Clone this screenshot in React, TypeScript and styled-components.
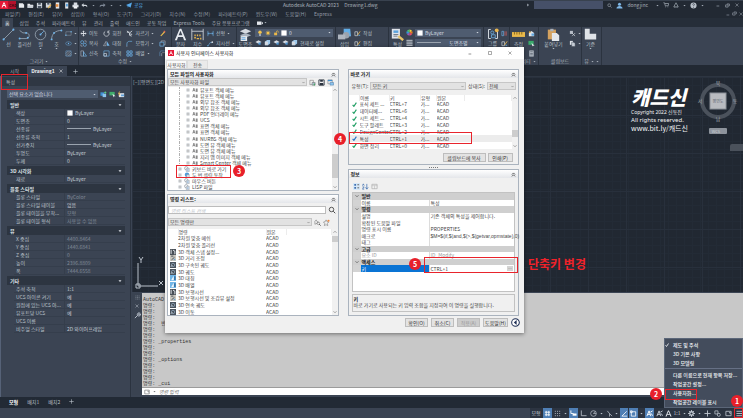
import React from 'react';
import styled, { createGlobalStyle, css } from 'styled-components';

const Global = createGlobalStyle`
  *, *::before, *::after { box-sizing: border-box; }
  html, body { margin: 0; padding: 0; }
  body { background: #222933; overflow: hidden; }
  body, button, select, input, table {
    font-family: "Noto Sans CJK KR", "Noto Sans", sans-serif;
    font-size: 5px;
    line-height: 6px;
  }
  button, select, input { margin: 0; padding: 0; border: 0; border-radius: 0; background: none; color: inherit; }
  ul { list-style: none; margin: 0; padding: 0; }
  a { color: inherit; text-decoration: none; }
  svg { display: block; flex: none; }
`;

/* ---------- icons ---------- */

const B = '#6fb4ea';
const W = '#d5dae1';

const glyphs: Record<string, React.ReactNode> = {
  line: <><path d="M2 14 14 2" stroke="#9aa7b5" /><circle cx="2" cy="14" r="1.3" fill={B} /><circle cx="14" cy="2" r="1.3" fill={B} /></>,
  poly: <><path d="M2 13h8c5 0 5-7 0-7H6L2 3" stroke="#9aa7b5" /><circle cx="2" cy="13" r="1.2" fill={B} /><circle cx="10" cy="6" r="1.2" fill={B} /><circle cx="12" cy="12" r="1.2" fill={B} /></>,
  circle: <><circle cx="8" cy="8" r="6.5" stroke="#9aa7b5" /><path d="M8 8 12 4" stroke={B} /><circle cx="8" cy="8" r="1.2" fill={B} /></>,
  arc: <><path d="M2 14C2 7 7 3 14 3" stroke="#9aa7b5" /><circle cx="2" cy="14" r="1.2" fill={B} /><circle cx="14" cy="3" r="1.2" fill={B} /><circle cx="5" cy="6" r="1.2" fill={B} /></>,
  rect: <><path d="M2 4h12v8H2z" stroke="#9aa7b5" /><circle cx="2" cy="12" r="1.6" fill={B} /><circle cx="14" cy="4" r="1.6" fill={B} /></>,
  ellipse: <><ellipse cx="8" cy="8" rx="6.5" ry="4" stroke={B} /><circle cx="8" cy="8" r="1.5" fill={B} /></>,
  hatch: <><path d="M2 2h12v12H2z" stroke={B} /><path d="M2 8 8 2M2 13 13 2M6 14l8-8M10 14l4-4" stroke={W} /></>,
  move: <path d="M8 1 11 4H9v3h3V5l3 3-3 3V9H9v3h2l-3 3-3-3h2V9H4v2L1 8l3-3v2h3V4H5z" fill={W} />,
  copy: <><circle cx="5" cy="5" r="3.5" stroke={B} strokeWidth="1.5" /><circle cx="11" cy="11" r="3.5" stroke={B} strokeWidth="1.5" /><path d="M10 2h4v4M2 10v4h4" stroke={W} /></>,
  stretch: <><path d="M2 2h6v12H2z" stroke={W} /><path d="M8 14h7L8 4z" stroke={B} strokeWidth="1.5" /></>,
  rotate: <path d="M5 3a6 6 0 1 0 6 0M11 3l4-1M11 3v4" stroke={W} strokeWidth="1.7" />,
  mirror: <><path d="M7 3v10H1z" stroke={W} /><path d="M9 3v10h6z" fill={B} /></>,
  scale: <><path d="M2 2h12v12H2z" stroke={B} strokeWidth="1.4" /><path d="M2 8h6v6H2z" stroke={W} strokeWidth="1.4" /></>,
  trim: <path d="M2 2l6 5M2 5h6M8 7l6-5M8 7v5l5 2M9 9l5 1" stroke={W} strokeWidth="2" />,
  fillet: <><path d="M2 14V9c0-4 3-6 6-6h6" stroke={B} strokeWidth="1.5" /><circle cx="2" cy="14" r="1" fill={W} /></>,
  array: <path d="M2 2h5v5H2zM9 2h5v5H9zM2 9h5v5H2zM9 9h5v5H9z" stroke={B} strokeWidth="1.7" />,
  pencil: <><path d="M3 13 12 3l2 2-9 9z" fill="#f0c14b" /><path d="M11 2l3 3" stroke="#e06a55" strokeWidth="3" /></>,
  box: <><path d="M2 5h9v9H2z" stroke={B} strokeWidth="1.6" /><path d="M5 5V2h9v9h-3" stroke={W} /></>,
  offset: <><path d="M2 14V6c0-2 1-4 4-4h8" stroke={B} /><path d="M6 14V8l2-2h6" stroke={W} /></>,
  text: <path d="M1 15 7 1h2l6 14h-2.6l-1.4-4H5l-1.4 4zM5.7 9h4.6L8 3.5z" fill="#e6eaef" />,
  dim: <><path d="M1 1v14M15 1v14M1 4h14" stroke={W} /><path d="M5 8v2M8 8v2M11 8v2M4 12h2M7 13h3M12 12v2" stroke="#e7b54e" strokeWidth="1.6" /></>,
  dimlin: <path d="M2 2v12M14 2v12M2 8h12M5 6 2 8l3 2M11 6l3 2-3 2" stroke={B} strokeWidth="1.3" />,
  leader: <><path d="M2 14 7 6h5" stroke={B} strokeWidth="1.3" /><circle cx="12" cy="5" r="2" fill={W} /><circle cx="2" cy="13" r="1.4" fill={B} /></>,
  layers: <><path d="M8 1l7 3-7 3-7-3z" fill={W} /><path d="M8 6l7 3-7 3-7-3z" fill="#aab3bf" /><path d="M2 10h8v6H2z" fill="#e6eaef" /><path d="M3 12h5M3 14h5" stroke="#4f9ad8" /></>,
  bulb: <><circle cx="8" cy="6" r="4.5" fill="#f3c34e" /><path d="M6 11h4v4H6z" fill="#dfe3e8" /></>,
  sun: <><circle cx="8" cy="8" r="4" fill="#f3c34e" /><path d="M8 1v14M1 8h14M3 3l10 10M13 3 3 13" stroke="#f3c34e" /></>,
  lock: <><path d="M3 7h8v7H3z" fill="#e9b84a" /><path d="M9 7V5c0-4 5-4 5 0v2" stroke="#e9b84a" strokeWidth="1.8" /></>,
  swatch: <path d="M1 1h14v14H1z" fill="#fff" />,
  lay1: <><path d="M1 7l7-4 7 4-7 4z" fill={W} /><path d="M8 8h5v5H8z" fill="#4f9ad8" /></>,
  lay2: <><path d="M2 6l5-4h7v8l-5 4H2z" fill="#9fc9ec" /><path d="M2 6h7v8H2z" fill={W} /></>,
  insert: <><path d="M7 1h8l1 9-9 1z" fill="#62aee8" /><circle cx="10" cy="9" r="4" fill="#9aa2ad" /><path d="M0 8h9v6H0z" fill="#aeb5bf" /></>,
  create: <><path d="M2 4h6v9H2z" stroke={W} strokeWidth="1.5" /><path d="M8 12 14 3" stroke="#e7b54e" strokeWidth="2" /><path d="M10 12h4" stroke={B} strokeWidth="2" /></>,
  props: <><path d="M1 1h10v12H1z" fill="#dfe4ea" /><path d="M3 3h6v3H3z" fill="#5ba3dd" /><path d="M3 8h6M3 10h5" stroke="#5d6876" /><path d="M9 10l6 5" stroke="#e7c46a" strokeWidth="3" /></>,
  wheel: <><path d="M8 8V1a7 7 0 0 1 6 3.500z" fill="#f4d03f" /><path d="M8 8l6-3.500a7 7 0 0 1 0 7z" fill="#e67e22" /><path d="M8 8l6 3.500A7 7 0 0 1 8 15z" fill="#e74c6c" /><path d="M8 8v7a7 7 0 0 1-6-3.500z" fill="#9b59b6" /><path d="M8 8l-6 3.500a7 7 0 0 1 0-7z" fill="#3498db" /><path d="M8 8 2 4.500A7 7 0 0 1 8 1z" fill="#4bbf73" /></>,
  weights: <path d="M1 3h14M1 7h14M1 11h14M1 14.500h14" stroke={W} strokeWidth="2" />,
  group: <><path d="M5 2H2v12h3M11 2h3v12h-3" stroke={W} strokeWidth="1.3" /><circle cx="7" cy="6" r="2" stroke={B} /><path d="M6 9h5v4H6z" stroke={B} /><circle cx="13" cy="3" r="2.500" fill="#e7b54e" /></>,
  ungroup: <><path d="M2 3h4v10H2z" stroke={B} strokeWidth="1.5" /><path d="M9 3v10M12 3v10" stroke="#d26060" strokeWidth="1.500" /></>,
  ruler: <><path d="M0 5h16v6H0z" fill="#e9b84a" /><path d="M3 5v3M6 5v3M9 5v3M12 5v3" stroke="#7b5c16" /></>,
  house: <><path d="M2 7l6-5 6 5v7H2z" fill="#dfe4ea" /><path d="M8 8h6v5H8z" fill="#5ba3dd" /><circle cx="4" cy="5" r="2" fill="#e7b54e" /></>,
  select: <><path d="M1 2h12v9H1z" fill="#39a96b" /><path d="M8 6l7 7-4 0-1 2z" fill="#e6eaef" /></>,
  calc: <><path d="M3 1h10v14H3z" fill="#b9c0c9" /><path d="M5 4h6M5 8h6M5 11h6" stroke="#4c5664" strokeWidth="1.500" /></>,
  paste: <><path d="M1 2h10v12H1z" fill="#d4a25f" /><path d="M4 1h4v3H4z" fill="#aab1bb" /><path d="M6 6h6l3 3v7H6z" fill="#e3e7ec" /></>,
  cut: <><path d="M2 2h7v7H2z" fill="#b7bec8" /><path d="M7 7l7 7M14 7l-7 7" stroke={W} strokeWidth="1.500" /></>,
  sheet: <><path d="M2 2h7v9H2z" fill="#dfe4ea" /><path d="M6 5h5l3 3v7H6z" fill="#c5ccd5" stroke="#3b4453" /></>,
  base: <path d="M1 1h6v6h8v7H1z" fill="#dfe3e8" />,
  newdoc: <path d="M2 3h9l3 3v7H2z" fill="#e8ebef" />,
  open: <><path d="M1 4h5l2 2h6v7H1z" fill="#e8ebef" /><path d="M3 8h12l-2 5H1z" fill="#c9cfd7" /></>,
  save: <><path d="M2 2h12v12H2z" fill="#cfd5dc" /><path d="M5 2h6v4H5zM4 9h8v5H4z" fill="#4c5664" /></>,
  saveas: <><path d="M2 2h11v11H2z" fill="#cfd5dc" /><path d="M5 2h5v4H5z" fill="#4c5664" /><path d="M7 14l7-8" stroke="#e7b54e" strokeWidth="2.500" /></>,
  phone: <><path d="M4 1h8v14H4z" fill="#e3e7ec" /><path d="M4 5h6v6H4z" fill="#e58a3c" /></>,
  phone2: <><path d="M5 1h7v14H5z" fill="#e3e7ec" /><path d="M7 4h4v6H7z" fill="#4f9ad8" /></>,
  print: <><path d="M4 1h8v5H4zM1 6h14v6H1z" fill="#d5dae1" /><path d="M4 10h8v5H4z" fill="#f5f6f8" /></>,
  undo: <path d="M1 7l5-4v3h4c4 0 5 3 4 6-1-2-3-3-5-3H6v3z" fill="#cfd5dc" />,
  redo: <path d="M15 7l-5-4v3H6c-4 0-5 3-4 6 1-2 3-3 5-3h3v3z" fill="#7e8896" />,
  plane: <path d="M0 8 16 1l-4 14-5-4-2 4-1-5z" fill="#57a9ea" />,
  user: <><circle cx="8" cy="5" r="3.500" fill="#7fb8e8" /><path d="M1 15c0-8 14-8 14 0z" fill="#7fb8e8" /></>,
  search: <><circle cx="7" cy="7" r="4.500" stroke="currentColor" strokeWidth="1.800" /><path d="m10.500 10.500 4 4" stroke="currentColor" strokeWidth="2" /></>,
  cart: <path d="M1 2h3l2 8h8l1-6H5M6 13h2M12 13h2" stroke="currentColor" strokeWidth="1.800" />,
  tri: <path d="M8 2 14 13H2zM5 13v2M11 13v2" stroke="currentColor" strokeWidth="1.800" />,
  help: <><circle cx="8" cy="8" r="7" fill="#b9c0c9" /><path d="M6 6c0-3 4-3 4 0 0 1-2 1-2 3M8 11v2" stroke="#2a323e" strokeWidth="1.500" /></>,
  min: <path d="M2 12h11" stroke="currentColor" strokeWidth="2.500" />,
  rest: <><path d="M2 6h8v7H2z" stroke="currentColor" strokeWidth="2" /><path d="M6 3h8v7" stroke="currentColor" strokeWidth="2" /></>,
  max: <path d="M2 2h12v12H2z" stroke="currentColor" strokeWidth="2" />,
  x: <path d="m2 2 12 12M14 2 2 14" stroke="currentColor" strokeWidth="2" />,
  down: <path d="M2 5h12L8 12z" fill="currentColor" />,
  chev: <path d="m2 5 6 6 6-6" stroke="currentColor" strokeWidth="2" />,
  chevup: <path d="m2 11 6-6 6 6" stroke="currentColor" strokeWidth="2" />,
  collapse: <path d="m3 8 5-5 5 5M3 14l5-5 5 5" stroke="currentColor" strokeWidth="2.200" />,
  right: <path d="M5 2v12l7-6z" fill="currentColor" />,
  wrench: <path d="M2 14 8 8M8 8c-2-4 2-7 5-6l-3 3 2 2 3-3c1 4-3 7-7 4" stroke="#b8c0ca" strokeWidth="2.200" />,
  pick: <><path d="M1 3h8v8H1z" fill="#3f8fd2" /><path d="M6 6h8v8H6z" fill="#8cc4ee" /><path d="M12 1v5M9.500 3.500h5" stroke="#5fd08b" strokeWidth="2" /></>,
  pick2: <><path d="M1 2h12v8H1z" fill="#3fae6c" /><path d="M8 6l7 6-4 0-1 3z" fill="#e6eaef" /></>,
  quick: <><path d="M2 5h12v9H2z" fill="#dfe4ea" /><path d="M7 8h7v4H7z" fill="#5d9fd8" /><path d="M4 1 1 6h3L2 10" stroke="#e7b54e" strokeWidth="2" /></>,
  check: <path d="M2 9l4 5L14 2" stroke="currentColor" strokeWidth="3.500" />,
  menu: <path d="M1 3h14M1 8h14M1 13h14" stroke="currentColor" strokeWidth="2" />,
  grid: <path d="M2 5h12M2 11h12M5 2v12M11 2v12" stroke="currentColor" strokeWidth="2" />,
  dots: <path d="M2 3h2M7 3h2M12 3h2M2 8h2M7 8h2M12 8h2M2 13h2M7 13h2M12 13h2" stroke="currentColor" strokeWidth="2" />,
  infer: <><path d="M2 1v7h6" stroke="currentColor" strokeWidth="2" /><path d="M6 8h9v5H6z" fill="currentColor" /></>,
  ortho: <path d="M3 1v12h12" stroke="currentColor" strokeWidth="1.800" />,
  polar: <><circle cx="8" cy="8" r="6.500" stroke="currentColor" strokeWidth="1.500" /><path d="M8 8h6M8 8l4-5" stroke="currentColor" strokeWidth="1.500" /></>,
  iso: <path d="M3 2l5 6 6 6M8 8v7" stroke="currentColor" strokeWidth="1.600" />,
  track: <path d="M2 14 13 3M2 14h12" stroke="currentColor" strokeWidth="1.800" />,
  snap: <path d="M3 4h10v10H3zM1 2h4v4H1z" stroke="currentColor" strokeWidth="1.800" />,
  ann: <path d="M2 14 7 2l4 12M4 10h5M10 5l5-3M12 8l3 5" stroke="currentColor" strokeWidth="2.200" />,
  gear: <><circle cx="8" cy="8" r="4" stroke="currentColor" strokeWidth="3" /><path d="M8 0v4M8 12v4M0 8h4M12 8h4M2.500 2.500l2 2M11.500 11.500l2 2M13.500 2.500l-2 2M4.500 11.500l-2 2" stroke="currentColor" strokeWidth="2" /></>,
  plus: <path d="M8 1v14M1 8h14" stroke="currentColor" strokeWidth="2" />,
  iso2: <><path d="M2 2h7v7H2z" stroke="currentColor" strokeWidth="1.600" /><circle cx="11" cy="11" r="3.500" stroke="currentColor" strokeWidth="1.600" /></>,
  screen: <path d="M2 3h12v10H2zM9 6h3v3" stroke="currentColor" strokeWidth="1.800" />,
  rec: <><path d="M0 4h12v9H0z" fill="#e3e7ec" /><path d="m12 8 4-3v7z" fill="#e3e7ec" /></>,
  leaf: <><path d="M2 12 5 3l3 9M3 9h4" stroke="#555" strokeWidth="1.600" /><path d="M10 4h5v9h-5z" fill="#8a8a8a" /></>,
  keys: <><circle cx="6" cy="6" r="4.500" stroke="#767f8b" strokeWidth="1.500" /><path d="M6 6h8v9H6z" fill="#dde4ec" stroke="#76808c" /><path d="M8 9h4M8 12h4" stroke="#5691c8" /></>,
  dblclick: <><circle cx="8" cy="7" r="6" fill="#4b9bd9" /><path d="M7 7h7v8H7z" fill="#dde4ec" stroke="#76808c" /></>,
  import: <><path d="M2 3h8v10H2z" stroke="#555" /><path d="M7 8h7v6H7z" fill="#bcd" stroke="#555" /><path d="M12 10v5" stroke="#3aa655" strokeWidth="2.500" /></>,
  disk: <><path d="M2 2h12v12H2z" stroke="#2c3440" strokeWidth="2" /><path d="M5 2h6v4H5zM4 9h8v5H4z" fill="#2c3440" /></>,
  wins: <><path d="M2 2h10v9H2z" stroke="#555" /><path d="M2 2h10v3H2z" fill="#3f8fd2" /><path d="M7 8h8v6H7z" fill="#8cc4ee" stroke="#3f6f9e" /></>,
  find: <><path d="m2 5 3-3 2 4 3 1-3 3-5 2z" stroke="#555" /><circle cx="10" cy="10" r="3" stroke="#555" /><path d="m12 12 3 3" stroke="#333" strokeWidth="2" /></>,
  star: <><path d="m7 2 2 4 4 1-3 3 1 5-4-2-4 2 1-5-3-3 4-1z" stroke="#555" /><circle cx="12.500" cy="4" r="2.500" fill="#f0883e" /></>,
  expand: <><path d="M3 3h10v10H3z" fill="#fff" stroke="#8b95a1" strokeWidth="1.500" /><path d="M5 8h6M8 5v6" stroke="#555" strokeWidth="1.400" /></>,
  cat: <><path d="M0 0h16v16H0z" fill="#d6e8f8" /><path d="M3 2h4v4H3zM3 9h4v4H3z" fill="#3f6fb0" /><path d="M10 4h4M10 11h4" stroke="#555" strokeWidth="2" /></>,
  sort: <path d="M3 2l2 4M3 2 1 6M1 9h4l-4 5h4M11 2v12M8 10l3 4 3-4" stroke="#3f6fb0" strokeWidth="1.700" />,
  pages: <><path d="M2 3h12v10H2z" stroke="#aaa" strokeWidth="1.500" /><path d="M2 6h12M8 6v7" stroke="#aaa" /></>,
  backc: <><circle cx="8" cy="8" r="6.800" fill="#fff" stroke="#1f2f55" strokeWidth="1.800" /><path d="M10 3.500 5 8l5 4.500z" fill="#1f2f55" /></>,
  acad: <><path d="M0 0h16v16H0z" fill="#e51937" /><path d="M3 13 7 3h2l4 10h-2l-1-3H6l-1 3zM6.800 8h2.500L8 5z" fill="#fff" /></>,
  c3a: <><path d="M0 0h16v16H0z" fill="#4a5058" /><path d="M3 2v11M8 3l5 3v8" stroke="#e6eaef" strokeWidth="2.500" /></>,
  c3b: <><path d="M0 0h16v16H0z" fill="#c9c6be" /><path d="M3 3h6M4 13l8-7" stroke="#4a4f57" strokeWidth="2.500" /><path d="M10 10h4v4h-4z" fill="#6da0cd" /></>,
  c3c: <><path d="M0 0h16v16H0z" fill="#4b535d" /><circle cx="8" cy="8" r="4.500" stroke="#8fa6ba" strokeWidth="2" /><path d="M2 13l5-5" stroke="#fff" strokeWidth="1.500" /></>,
  c3d: <><path d="M0 0h16v16H0z" fill="#71b6e8" /><path d="M3 14 10 2v12z" fill="#f3f7fa" /><path d="M11 3h4v10h-4z" fill="#2f6ea3" /></>,
};

const Ico = ({ n, s = 7, w }: { n: string; s?: number; w?: number }) => (
  <svg width={w ?? s} height={s} viewBox="0 0 16 16" fill="none" aria-hidden="true">{glyphs[n]}</svg>
);

/* ---------- shared parts ---------- */

const Row = styled.div<{ $gap?: number }>`
  display: flex;
  align-items: center;
  gap: ${(p) => p.$gap ?? 0}px;
`;
const Spacer = styled.span`flex: 1;`;

const SelectWrap = styled.span<{ $tone: 'dark' | 'light' }>`
  display: flex;
  align-items: center;
  flex: 1;
  min-width: 0;
  height: 8px;
  padding: 0 2px;
  gap: 2px;
  ${(p) => (p.$tone === 'dark'
    ? css`background: #4f5c70; color: #d3d9e0;`
    : css`background: #e2e2e2; color: #444; border: 1px solid #c6c6c6; padding: 0 1px;`)}
`;
const SelectEl = styled.select<{ $center?: boolean }>`
  appearance: none;
  flex: 1;
  min-width: 0;
  height: 6px;
  outline: 0;
  text-align: ${(p) => (p.$center ? 'center' : 'left')};
  text-align-last: ${(p) => (p.$center ? 'center' : 'left')};
`;
const Combo = ({ label, value, tone = 'dark', children, center }: {
  label: string; value: string; tone?: 'dark' | 'light'; children?: React.ReactNode; center?: boolean;
}) => (
  <SelectWrap $tone={tone}>
    {children}
    <SelectEl aria-label={label} $center={center}><option>{value}</option></SelectEl>
    <Ico n={tone === 'dark' ? 'down' : 'chev'} s={3} />
  </SelectWrap>
);

/* ---------- application frame ---------- */

const App = styled.div`
  position: relative;
  display: flex;
  flex-direction: column;
  min-height: 100vh;
  overflow: hidden;
  background: #222933;
  color: #b9c0c9;
`;
const TitleBar = styled.header`
  display: grid;
  grid-template-columns: 283px 1fr auto;
  align-items: center;
  height: 9px;
  border-top: 1px solid #39424f;
  color: #a9b1bb;
`;
const Quick = styled(Row)`gap: 2px; height: 8px;`;
const QuickButton = styled.button`display: flex; width: 7px; justify-content: center; color: #9aa3ae;`;
const AppBadge = styled.button`
  display: flex;
  align-items: center;
  gap: 1px;
  width: 16px;
  height: 8px;
  background: #b3122d;
  color: #3c0710;
  font-size: 4px;
  font-weight: 700;
`;
const Share = styled.a`display: flex; align-items: center; gap: 2px; color: #57a9ea;`;
const SearchBox = styled.input`width: 69px; height: 8px; background: #465068;`;
const MenuBar = styled.nav`
  display: flex;
  align-items: center;
  gap: 8px;
  height: 9px;
  padding-left: 5px;
  color: #939ca7;
`;
const MenuButton = styled.button`white-space: nowrap;`;
const RibbonTabs = styled.nav`
  display: flex;
  align-items: center;
  height: 9px;
  gap: 7px;
  padding-left: 2px;
  background: #262e39;
  color: #a8b0ba;
`;
const RibbonTab = styled.button<{ $on?: boolean }>`
  height: 9px;
  white-space: nowrap;
  ${(p) => p.$on && css`background: #3b4453; padding: 0 3px; color: #dfe3e8;`}
`;
const Ribbon = styled.section`
  display: flex;
  height: 38px;
  background: #3b4453;
`;
const Panel = styled.section<{ $w: number }>`
  display: flex;
  flex-direction: column;
  width: ${(p) => p.$w}px;
  flex: none;
  border-right: 1px solid #2b333f;
`;
const PanelTools = styled.div<{ $gap?: number }>`
  display: flex;
  flex: 1;
  padding: 1px 0 0 1px;
  gap: ${(p) => p.$gap ?? 2}px;
`;
const PanelTitle = styled.button`
  display: flex;
  align-items: center;
  justify-content: center;
  gap: 2px;
  height: 8px;
  color: #a8b0ba;
  white-space: nowrap;
`;
const BigTool = styled.button`
  display: flex;
  flex-direction: column;
  align-items: center;
  width: 15px;
  flex: none;
  white-space: nowrap;
  color: #b9c0c9;
`;
const ToolColumn = styled.div`
  display: flex;
  flex-direction: column;
  gap: 2px;
  padding-top: 1px;
`;
const SmallTool = styled.button`
  display: flex;
  align-items: center;
  gap: 2px;
  height: 8px;
  white-space: nowrap;
  color: #b9c0c9;
`;
const ComboColumn = styled.div`display: flex; flex: 1; flex-direction: column; gap: 1px; padding-right: 2px;`;
const ComboRow = styled.div`display: flex; align-items: center; gap: 2px; height: 9px; white-space: nowrap;`;
const RuleSample = styled.span`width: 24px; height: 1px; background: #9aa3ae;`;

const Big = ({ n, label, more, s = 13 }: { n: string; label: string; more?: boolean; s?: number }) => (
  <BigTool><Ico n={n} s={s} /><span>{label}</span>{more && <Ico n="down" s={3} />}</BigTool>
);
const Small = ({ n, label, more }: { n: string; label?: string; more?: boolean }) => (
  <SmallTool aria-label={label ?? n}><Ico n={n} />{label}{more && <Ico n="down" s={3} />}</SmallTool>
);

const DocTabs = styled.nav`
  display: flex;
  align-items: center;
  gap: 6px;
  height: 11px;
  padding: 1px 0 0 8px;
  background: #222933;
`;
const DocTab = styled.button<{ $on?: boolean }>`
  display: flex;
  align-items: center;
  gap: 4px;
  height: 10px;
  padding: 0 2px;
  color: #a8b0ba;
  ${(p) => p.$on && css`background: #3b4453; color: #eef0f3; font-weight: 700; padding: 0 4px;`}
`;
const Body = styled.main`
  display: grid;
  grid-template-columns: 131px 1fr;
  flex: 1;
  background: #3b4453;
`;

/* ---------- properties palette ---------- */

const Palette = styled.aside`
  padding: 1px 5px 0 6px;
  border-left: 1px solid #566277;
  border-right: 1px solid #2b333f;
`;
const PaletteTitle = styled.h2`
  margin: 0 -5px 4px -6px;
  padding-left: 5px;
  height: 9px;
  background: #2f3743;
  font-size: 5px;
  line-height: 9px;
  font-weight: 400;
`;
const PaletteTop = styled.div`display: flex; align-items: center; gap: 2px; height: 8px; margin-bottom: 2px;`;
const IconButton = styled.button`display: flex; align-items: center; justify-content: center;`;
const Group = styled.section`margin-bottom: 1px;`;
const GroupHead = styled.button`
  display: flex;
  align-items: center;
  justify-content: space-between;
  width: 100%;
  height: 9px;
  padding: 0 3px;
  background: #2d3541;
  color: #dfe3e8;
  font-weight: 700;
`;
const PropTable = styled.table`
  width: calc(100% - 7px);
  margin-left: 7px;
  border-collapse: separate;
  border-spacing: 0;
  table-layout: fixed;
  th, td {
    height: 8px;
    padding: 0 0 0 2px;
    line-height: 7px;
    border-bottom: 1px solid #353e4c;
    font-weight: 400;
    text-align: left;
    white-space: nowrap;
    overflow: hidden;
  }
  th { width: 50px; }
  td { color: #c5cbd3; border-left: 1px solid #353e4c; }
`;
const Value = styled.span<{ $dim?: boolean }>`
  display: flex;
  align-items: center;
  gap: 2px;
  ${(p) => p.$dim && css`color: #808a97;`}
`;

type Prop = [string, string, ('dim' | 'line' | 'swatch')?];
const groups: { title: string; rows: Prop[] }[] = [
  { title: '일반', rows: [['색상', 'ByLayer', 'swatch'], ['도면층', '0'], ['선종류', 'ByLayer', 'line'], ['선종류 축척', '1'], ['선가중치', 'ByLayer', 'line'], ['투명도', 'ByLayer'], ['두께', '0']] },
  { title: '3D 시각화', rows: [['재료', 'ByLayer']] },
  { title: '플롯 스타일', rows: [['플롯 스타일', 'ByColor', 'dim'], ['플롯 스타일 테이블', '없음'], ['플롯 테이블을 부착...', '모형', 'dim'], ['플롯 테이블 형식', '사용할 수 없음', 'dim']] },
  { title: '뷰', rows: [['X 중심', '4400.8464', 'dim'], ['Y 중심', '1440.6841', 'dim'], ['Z 중심', '0', 'dim'], ['높이', '2396.8809', 'dim'], ['폭', '7444.6558', 'dim']] },
  { title: '기타', rows: [['주석 축척', '1:1'], ['UCS 아이콘 켜기', '예'], ['원점에 있는 UCS 아...', '예'], ['뷰포트당 UCS', '예'], ['UCS 이름', ''], ['비주얼 스타일', '2D 와이어프레임']] },
];

/* ---------- drawing area and command window ---------- */

const Work = styled.div`display: flex; flex-direction: column; padding-left: 1px; min-width: 0;`;
const Canvas = styled.section`
  position: relative;
  flex: 1;
  border-top: 1px solid #2d3541;
  background-color: #212832;
  background-image:
    linear-gradient(#28303c 1px, transparent 1px),
    linear-gradient(90deg, #28303c 1px, transparent 1px),
    linear-gradient(#232b36 1px, transparent 1px),
    linear-gradient(90deg, #232b36 1px, transparent 1px);
  background-size: 38px 38px, 38px 38px, 8px 8px, 8px 8px;
`;
const ViewLabel = styled.span`position: absolute; left: 1px; top: 2px; color: #a8b0ba; white-space: nowrap;`;
const Ucs = styled.svg`position: absolute; left: 3px; bottom: 3px;`;
const Credit = styled.div`
  position: absolute;
  right: 55px;
  top: 8px;
  display: flex;
  flex-direction: column;
  color: #f4f5f7;
  font-family: "Noto Sans", "Noto Sans CJK KR", sans-serif;
  font-size: 6px;
  line-height: 8px;
  white-space: nowrap;
`;
const CreditName = styled.strong`font-family: "Noto Sans CJK KR", sans-serif; font-size: 20px; line-height: 23px; font-weight: 900; font-style: italic; color: #fff;`;
const CreditSmall = styled.span`font-size: 5px;`;
const CreditLink = styled.a`font-family: "Noto Sans CJK KR", sans-serif; font-size: 7px;`;
const Cube = styled.svg`position: absolute; right: 3px; top: 2px;`;
const NavBar = styled.span`position: absolute; right: 0; top: 67px; width: 13px; height: 7px; background: #4a515b; border-radius: 2px 0 0 0;`;
const Command = styled.section`
  display: grid;
  grid-template-columns: 10px 1fr;
  height: 102px;
  margin: 1px 0 2px;
`;
const CommandSide = styled.div`
  display: flex;
  flex-direction: column;
  align-items: center;
  gap: 4px;
  padding-top: 2px;
  background: #3a4351;
  color: #b8c0ca;
`;
const CommandMain = styled.div`display: flex; flex-direction: column;`;
const History = styled.pre`
  display: flex;
  flex-direction: column;
  justify-content: flex-end;
  flex: 1;
  margin: 0;
  padding: 0 0 0 1px;
  background: #c8c8c8;
  color: #333;
  font-family: "Liberation Mono", "Noto Sans CJK KR", monospace;
  font-size: 5px;
  line-height: 6px;
`;
const Prompt = styled.label`
  display: flex;
  align-items: center;
  gap: 3px;
  height: 8px;
  padding-left: 2px;
  border-top: 1px solid #9b9b9b;
  background: #fff;
  color: #777;
`;
const PromptInput = styled.input`flex: 1; height: 7px; font-style: italic; &::placeholder { color: #777; }`;

/* ---------- bottom bars ---------- */

const LayoutBar = styled.nav`display: flex; align-items: center; gap: 9px; height: 11px; padding: 0 0 2px 9px; background: #222a35;`;
const LayoutTab = styled.button<{ $on?: boolean }>`${(p) => p.$on && css`color: #fff; font-weight: 700;`}`;
const StatusBar = styled.footer`
  display: flex;
  align-items: center;
  gap: 1px;
  height: 10px;
  background: #3b4453;
  color: #c3cad3;
`;
const StatusTools = styled.div`display: flex; align-items: center; gap: 1px; background: #2c3441;`;
const StatusButton = styled.button<{ $on?: boolean; $w?: number }>`
  display: flex;
  align-items: center;
  justify-content: center;
  width: ${(p) => p.$w ?? 9}px;
  height: 10px;
  white-space: nowrap;
  ${(p) => p.$on && css`background: #4f7fb5; color: #fff;`}
`;
const status: [string, boolean?, number?][] = [
  ['grid', true], ['dots'], ['down', false, 5], ['infer', true], ['ortho'], ['polar'], ['down', false, 5], ['iso', false, 8], ['down', false, 5],
  ['track', true, 8], ['snap', true], ['down', false, 5], ['ann', true, 9], ['ann', false, 8], ['text', false, 8],
];
const status2: [string, number?][] = [['down', 4], ['gear'], ['down', 5], ['plus'], ['iso2'], ['screen', 11], ['menu', 8]];

const WorkspaceMenu = styled.div`
  position: absolute;
  right: 0;
  bottom: 10px;
  width: 79px;
  padding: 1px 0;
  background: #434c5c;
  border: 1px solid #5b6678;
`;
const WorkspaceItem = styled.button`
  display: grid;
  grid-template-columns: 8px 1fr;
  align-items: center;
  width: 100%;
  height: 9px;
  color: #eef0f3;
  font-weight: 500;
  text-align: left;
  white-space: nowrap;
`;
const MenuRule = styled.hr`margin: 1px 0; border: 0; border-top: 1px solid #667085;`;

/* ---------- customize dialog ---------- */

const Dialog = styled.section`
  position: absolute;
  left: 165px;
  top: 47px;
  width: 359px;
  height: 286px;
  display: flex;
  flex-direction: column;
  background: #f0f0f0;
  color: #484848;
  box-shadow: 0 1px 4px rgba(0, 0, 0, 0.45);
`;
const DialogTitle = styled.div`
  display: flex;
  align-items: center;
  gap: 2px;
  height: 12px;
  padding: 0 5px 0 3px;
  background: #fff;
  color: #222;
`;
const WindowButton = styled.button`display: flex; justify-content: center; width: 18px; color: #555;`;
const DialogTabs = styled.div`display: flex; height: 9px; margin-top: 1px; padding-left: 1px;`;
const DialogTab = styled.button<{ $on?: boolean }>`
  width: 21px;
  border: 1px solid #dcdcdc;
  background: ${(p) => (p.$on ? '#fafafa' : '#eaeaea')};
  white-space: nowrap;
`;
const Columns = styled.div`
  display: grid;
  grid-template-columns: 1fr 1fr;
  gap: 9px;
  padding: 0 5px 0 2px;
`;
const Column = styled.div<{ $gap: number }>`display: flex; flex-direction: column; gap: ${(p) => p.$gap}px; min-width: 0;`;
const Pane = styled.section<{ $h: number }>`
  display: flex;
  flex-direction: column;
  height: ${(p) => p.$h}px;
  border: 1px solid #aab3be;
  background: #f0f0f0;
`;
const PaneHead = styled.h3`
  display: flex;
  align-items: center;
  justify-content: space-between;
  height: 8px;
  margin: 0;
  padding: 0 2px;
  background: linear-gradient(#fff, #e4e6ea);
  color: #222;
  font-size: 5px;
  line-height: 6px;
  font-weight: 700;
  flex: none;
`;
const Tools = styled.div<{ $pad?: string }>`
  display: flex;
  align-items: center;
  gap: 2px;
  padding: ${(p) => p.$pad ?? '0'};
  flex: none;
`;
const Scrolled = styled.div`
  display: grid;
  grid-template-columns: 1fr 6px;
  flex: 1;
  min-height: 0;
  background: #fff;
`;
const ScrollBar = styled.div<{ $at: number; $size: number }>`
  display: flex;
  flex-direction: column;
  align-items: center;
  justify-content: space-between;
  padding: 1px 0;
  color: #555;
  background: linear-gradient(#cdcdcd, #cdcdcd) 0 ${(p) => p.$at}px / 6px ${(p) => p.$size}px no-repeat #f1f1f1;
`;
const Scroll = (p: { at: number; size: number }) => (
  <ScrollBar $at={p.at} $size={p.size}><Ico n="chevup" s={4} /><Ico n="chev" s={4} /></ScrollBar>
);
const Tree = styled.ul`
  display: flex;
  flex-direction: column;
  min-height: 0;
  overflow: hidden;
`;
const TreeItem = styled.li<{ $deep: boolean }>`
  display: flex;
  align-items: center;
  flex: 1;
  min-height: 0;
  gap: 2px;
  margin-left: ${(p) => (p.$deep ? 11 : 10)}px;
  padding-left: ${(p) => (p.$deep ? 6 : 0)}px;
  line-height: 6px;
  white-space: nowrap;
  ${(p) => p.$deep && css`border-left: 1px dotted #b0b0b0;`}
`;
const ListTable = styled.table`
  width: 100%;
  height: 100%;
  border-collapse: collapse;
  table-layout: fixed;
  th, td { padding: 0; line-height: 6px; font-weight: 400; text-align: left; white-space: nowrap; overflow: hidden; }
  thead th { border-right: 1px solid #ececec; }
  td svg { margin: 0 auto; }
`;
const ListRow = styled.tr<{ $on?: boolean }>`${(p) => p.$on && css`background: #ececec;`}`;
const Col = styled.col<{ $w?: number }>`${(p) => p.$w && css`width: ${p.$w}px;`}`;
const Field = styled.input`flex: 1; min-width: 0; height: 8px; padding: 0 2px; border: 1px solid #bcbcbc; background: #fff; font-style: italic; &::placeholder { color: #c2c6cc; }`;
const FieldLabel = styled.span`display: flex; align-items: center; gap: 3px; white-space: nowrap;`;
const ShortSelect = styled.span<{ $w: number }>`display: flex; width: ${(p) => p.$w}px;`;
const PushButton = styled.button<{ $w: number; $off?: boolean }>`
  width: ${(p) => p.$w}px;
  height: 9px;
  border: 1px solid #bdbdbd;
  background: ${(p) => (p.$off ? '#cccccc' : '#e3e3e3')};
  color: ${(p) => (p.$off ? '#9a9a9a' : '#333')};
  white-space: nowrap;
`;
const Splitter = styled.div`height: 2px; width: 9px; margin: 0 auto; border-bottom: 1px dotted #777; flex: none;`;
const GridBox = styled.div`margin: 0 3px; flex: 1; border: 1px solid #c2c2c2; background: #fff; min-height: 0;`;
const GridTable = styled.table`
  width: 100%;
  height: 79px;
  border-collapse: separate;
  border-spacing: 0;
  table-layout: fixed;
  th, td { padding: 0 1px; line-height: 6px; font-weight: 400; text-align: left; white-space: nowrap; }
  td { border-left: 1px solid #dcdcdc; }
  th:first-child { background: #d3d3d3; padding: 0 2px; }
`;
const GridRow = styled.tr<{ $kind: string }>`
  ${(p) => p.$kind === 'cat' && css`th, th:first-child { background: #cfcfcf; font-weight: 700; color: #222; }`}
  ${(p) => p.$kind === 'dim' && css`color: #9a9a9a;`}
  ${(p) => p.$kind === 'sel' && css`th + th { background: #0a74d4; color: #fff; }`}
  ${(p) => p.$kind === 'macro' && css`td { font-family: "Liberation Sans", sans-serif; }`}
`;
const KeyCell = styled.span`display: flex; align-items: center; justify-content: space-between;`;
const MoreButton = styled.button`width: 6px; height: 5px; background: #d4d4d4; font-size: 4px; line-height: 4px; color: #666;`;
const Hint = styled.div`margin: 2px 3px 3px; height: 18px; padding: 1px; border: 1px solid #c2c2c2; flex: none; white-space: nowrap;`;
const HintTitle = styled.strong`display: block; color: #222;`;
const DialogFoot = styled.div`
  display: flex;
  align-items: center;
  justify-content: flex-end;
  gap: 3px;
  flex: 1;
  padding: 0 4px 4px 0;
`;

const tree = ['뷰포트 객체 메뉴', '뷰포트 객체 메뉴', '외부 참조 객체 메뉴', '외부 참조 객체 메뉴', 'PDF 언더레이 메뉴', 'UCS', '표면 객체 메뉴', '표면 객체 메뉴', 'NURBS 객체 메뉴', '도면 뷰 객체 메뉴', '도면 뷰 객체 메뉴', '지리 맵 이미지 객체 메뉴', 'Smart Center 객체 메뉴'];
const treeTop: [string, string][] = [['keys', '키보드 바로 가기'], ['dblclick', '두 번 클릭 동작'], ['keys', '마우스 버튼'], ['keys', 'LISP 파일']];
const commands: [string, string][] = [
  ['', '2차원 맞춤 메쉬'], ['', '2차원 맞춤 폴리선'], ['c3a', '3D 객체 스냅 설정...'], ['c3b', '3D 거리 조정'], ['c3c', '3D 구속된 궤도'], ['c3c', '3D 궤도'],
  ['c3d', '3D 대칭'], ['c3d', '3D 배열'], ['c3a', '3D 보행시선'], ['c3b', '3D 보행시선 및 조감뷰 설정'], ['c3c', '3D 연속 궤도'], ['c3c', '3D 이동'],
];
const shortcuts: [string, string][] = [['표식 세트 ...', 'CTRL+7'], ['데이터베...', 'CTRL+6'], ['시트 세트 ...', 'CTRL+4'], ['도구 팔레트', 'CTRL+3'], ['DesignCenter', 'CTRL+2'], ['특성', 'CTRL+1'], ['화면 정리', 'CTRL+0']];
const info: [string, string, string?][] = [
  ['cat', '일반'], ['', '이름', '특성'], ['cat', '명령'], ['', '설명', '기존 객체의 특성을 제어합니다.'], ['', '확장된 도움말 파일', ''],
  ['', '명령 표시 이름', 'PROPERTIES'], ['macro', '매크로', '$M=$(if,$(and,$(>,$(getvar,opmstate),0)'], ['', '태그', ''],
  ['cat', '고급'], ['dim', '요소 ID', 'ID_Modify'], ['cat', '액세스'], ['sel', '키', 'CTRL+1'],
];

const CheckMark = styled.span<{ $on?: boolean }>`display: block; color: ${(p) => (p.$on ? '#2374c6' : '#1e9e62')};`;

const CustomizeDialog = () => (
  <Dialog role="dialog" aria-label="사용자 인터페이스 사용자화">
    <DialogTitle>
      <Ico n="acad" s={6} />사용자 인터페이스 사용자화<Spacer />
      <WindowButton aria-label="최소화"><Ico n="min" s={4} /></WindowButton>
      <WindowButton aria-label="최대화"><Ico n="max" s={4} /></WindowButton>
      <WindowButton aria-label="닫기"><Ico n="x" s={4} /></WindowButton>
    </DialogTitle>
    <DialogTabs><DialogTab $on>사용자화</DialogTab><DialogTab>전송</DialogTab></DialogTabs>
    <Columns>
      <Column $gap={3}>
        <Pane $h={122}>
          <PaneHead>모든 파일의 사용자화<Ico n="collapse" s={5} /></PaneHead>
          <Tools $pad="0 4px 1px 0">
            <Combo label="사용자화 파일" value="모든 사용자화 파일" tone="light" />
            <IconButton aria-label="가져오기"><Ico n="import" /></IconButton>
            <IconButton aria-label="저장"><Ico n="disk" /></IconButton>
            <IconButton aria-label="창"><Ico n="wins" /></IconButton>
          </Tools>
          <Scrolled>
            <Tree>
              {tree.map((t, i) => <TreeItem key={i} $deep><Ico n="expand" s={4} /><Ico n="leaf" s={6} />{t}</TreeItem>)}
              {treeTop.map(([n, t]) => <TreeItem key={t} $deep={false}><Ico n="expand" s={4} /><Ico n={n} s={6} />{t}</TreeItem>)}
            </Tree>
            <Scroll at={67} size={24} />
          </Scrolled>
        </Pane>
        <Pane $h={122}>
          <PaneHead>명령 리스트:<Ico n="collapse" s={5} /></PaneHead>
          <Tools $pad="3px 2px 2px 0"><Field aria-label="명령 리스트 검색" placeholder="명령 리스트 검색" /><IconButton aria-label="검색"><Ico n="search" s={8} /></IconButton></Tools>
          <Tools $pad="2px 8px 3px 0">
            <Combo label="명령 범주" value="모든 명령만" tone="light" />
            <IconButton aria-label="명령 찾기"><Ico n="find" /></IconButton>
            <IconButton aria-label="새 명령"><Ico n="star" /></IconButton>
          </Tools>
          <Scrolled>
            <ListTable>
              <colgroup><Col $w={10} /><Col $w={88} /><Col $w={20} /><Col /></colgroup>
              <thead><tr><th /><th scope="col">명령</th><th scope="col">원본</th><th /></tr></thead>
              <tbody>{commands.map(([n, t]) => <tr key={t}><td>{n && <Ico n={n} s={6} />}</td><td>{t}</td><td>ACAD</td><td /></tr>)}</tbody>
            </ListTable>
            <Scroll at={7} size={6} />
          </Scrolled>
        </Pane>
      </Column>
      <Column $gap={1}>
        <Pane $h={96}>
          <PaneHead>바로 가기<Ico n="collapse" s={5} /></PaneHead>
          <Tools $pad="4px 2px 5px 3px">
            <FieldLabel>유형(T):</FieldLabel><Combo label="유형(T)" value="모든 키" tone="light" />
            <FieldLabel>상태(S):</FieldLabel>
            <ShortSelect $w={29}><Combo label="상태(S)" value="전체" tone="light" /></ShortSelect>
          </Tools>
          <Scrolled>
            <ListTable>
              <colgroup><Col $w={11} /><Col $w={30} /><Col $w={31} /><Col $w={16} /><Col $w={28} /><Col /></colgroup>
              <thead><tr><th /><th scope="col">이름</th><th scope="col">키</th><th scope="col">유형</th><th scope="col">원본</th><th /></tr></thead>
              <tbody>{shortcuts.map(([t, k]) => (
                <ListRow key={k} $on={t === '특성'}><td><CheckMark $on={t === '특성'}><Ico n="check" s={5} /></CheckMark></td><td>{t}</td><td>{k}</td><td>가...</td><td>ACAD</td><td /></ListRow>
              ))}</tbody>
            </ListTable>
            <Scroll at={35} size={7} />
          </Scrolled>
          <Tools $pad="4px 3px 2px 94px"><PushButton $w={43}>클립보드에 복사</PushButton><PushButton $w={25}>인쇄(P)</PushButton></Tools>
        </Pane>
        <Splitter />
        <Pane $h={147}>
          <PaneHead>정보<Ico n="collapse" s={5} /></PaneHead>
          <Tools $pad="5px 0 2px 4px">
            <IconButton aria-label="범주별"><Ico n="cat" /></IconButton>
            <IconButton aria-label="정렬"><Ico n="sort" /></IconButton>
            <IconButton aria-label="특성 페이지"><Ico n="pages" /></IconButton>
          </Tools>
          <GridBox>
            <GridTable>
              <colgroup><Col $w={8} /><Col $w={68} /><Col /></colgroup>
              <tbody>{info.map(([k, t, v]) => (
                <GridRow key={t} $kind={k}>
                  <th>{k === 'cat' && <Ico n="chev" s={4} />}</th>
                  <th scope="row" colSpan={k === 'cat' ? 2 : 1}>{t}</th>
                  {k !== 'cat' && <td>{k === 'sel' ? <KeyCell>{v}<MoreButton aria-label="키 지정">…</MoreButton></KeyCell> : v}</td>}
                </GridRow>
              ))}</tbody>
            </GridTable>
          </GridBox>
          <Hint><HintTitle>키</HintTitle>바로 가기로 사용되는 키 입력 조합을 지정하여 이 명령을 실행합니다.</Hint>
        </Pane>
      </Column>
    </Columns>
    <DialogFoot>
      <PushButton $w={23}>확인(O)</PushButton><PushButton $w={23}>취소(C)</PushButton>
      <PushButton $w={23} $off disabled>적용(A)</PushButton><PushButton $w={25}>도움말(H)</PushButton>
      <IconButton aria-label="축소"><Ico n="backc" s={9} /></IconButton>
    </DialogFoot>
  </Dialog>
);

/* ---------- tutorial annotations ---------- */

const Frame = styled.span<{ $x: number; $y: number; $w: number; $h: number }>`
  position: absolute;
  left: ${(p) => p.$x}px;
  top: ${(p) => p.$y}px;
  width: ${(p) => p.$w}px;
  height: ${(p) => p.$h}px;
  border: 1px solid #e8242c;
  pointer-events: none;
`;
const Pin = styled.span<{ $x: number; $y: number }>`
  position: absolute;
  left: ${(p) => p.$x - 6}px;
  top: ${(p) => p.$y - 6}px;
  width: 12px;
  height: 12px;
  border-radius: 50%;
  background: #e8202a;
  color: #fff;
  font-size: 7px;
  line-height: 12px;
  font-weight: 700;
  text-align: center;
`;
const Note = styled.strong`
  position: absolute;
  left: 528px;
  top: 256px;
  color: #f0222a;
  font-size: 12px;
  line-height: 16px;
  font-weight: 700;
  white-space: nowrap;
`;

const menus = ['파일(F)', '편집(E)', '뷰(V)', '삽입(I)', '형식(O)', '도구(T)', '그리기(D)', '치수(N)', '수정(M)', '파라메트릭(P)', '윈도우(W)', '도움말(H)', 'Express'];
const tabs = ['삽입', '주석', '파라메트릭', '뷰', '관리', '출력', '애드인', '공동 작업', 'Express Tools', '주요 응용프로그램'];
const history = ['AutoCAD', '명령:', '명령:', '명령:', '명령:  반대 구석 지정', '명령:', '명령:', '명령: _properties', '명령:', '명령:', '명령: _options', '명령:', '명령:', '명령:', '명령: _cui'];

export default function Page() {
  return (
    <App>
      <Global />
      <TitleBar>
        <Quick>
          <AppBadge aria-label="응용프로그램 메뉴"><Ico n="acad" s={8} />CAD</AppBadge>
          {['newdoc', 'open', 'save', 'saveas', 'phone', 'phone2', 'print', 'undo', 'down', 'redo', 'down', 'down'].map((n, i) => (
            <QuickButton key={i} aria-label={n}><Ico n={n} s={n === 'down' ? 3 : 7} /></QuickButton>
          ))}
          <Share href="#share"><Ico n="plane" s={6} />공유</Share>
        </Quick>
        <span>Autodesk AutoCAD 2023&nbsp;&nbsp;&nbsp;&nbsp; Drawing1.dwg</span>
        <Row $gap={4}>
          <Ico n="right" s={4} /><SearchBox aria-label="검색" /><Ico n="search" s={5} />
          <Ico n="user" s={7} /><span>dongjinc</span><Spacer /><Ico n="down" s={3} />
          <Ico n="cart" s={6} /><Ico n="tri" s={6} /><Ico n="down" s={3} /><Ico n="help" s={7} /><Ico n="down" s={3} />
          <Spacer /><Spacer /><Row $gap={5}><Ico n="min" s={4} /><Ico n="rest" s={5} /><Ico n="x" s={4} /></Row><span />
        </Row>
      </TitleBar>
      <MenuBar>
        {menus.map((m) => <MenuButton key={m}>{m}</MenuButton>)}
        <Spacer /><Row $gap={2}><Ico n="min" s={4} /><Ico n="rest" s={5} /><Ico n="x" s={4} /></Row>
      </MenuBar>
      <RibbonTabs>
        <RibbonTab $on>홈</RibbonTab>
        {tabs.map((t) => <RibbonTab key={t}>{t}</RibbonTab>)}
        <Row $gap={1}><Ico n="rec" s={6} /><Ico n="down" s={3} /></Row>
      </RibbonTabs>
      <Ribbon>
        <Panel $w={79}>
          <PanelTools $gap={1}>
            <Big n="line" label="선" /><Big n="poly" label="폴리선" /><Big n="circle" label="원" more /><Big n="arc" label="호" more />
            <ToolColumn><Small n="rect" more /><Small n="ellipse" more /><Small n="hatch" more /></ToolColumn>
          </PanelTools>
          <PanelTitle>그리기<Ico n="down" s={3} /></PanelTitle>
        </Panel>
        <Panel $w={93}>
          <PanelTools $gap={5}>
            <ToolColumn><Small n="move" label="이동" /><Small n="copy" label="복사" /><Small n="stretch" label="신축" /></ToolColumn>
            <ToolColumn><Small n="rotate" label="회전" /><Small n="mirror" label="대칭" /><Small n="scale" label="축척" /></ToolColumn>
            <ToolColumn><Small n="trim" label="자르기" more /><Small n="fillet" label="모깎기" more /><Small n="array" label="배열" more /></ToolColumn>
            <ToolColumn><Small n="pencil" /><Small n="box" /><Small n="offset" /></ToolColumn>
          </PanelTools>
          <PanelTitle>수정<Ico n="down" s={3} /></PanelTitle>
        </Panel>
        <Panel $w={65}>
          <PanelTools>
            <Big n="text" label="문자" /><Big n="dim" label="치수" />
            <ToolColumn><Small n="dimlin" label="선형" more /><Small n="leader" label="지시선" more /></ToolColumn>
          </PanelTools>
        </Panel>
        <Panel $w={99}>
          <PanelTools>
            <Big n="layers" label="도면층" />
            <ComboColumn>
              <ComboRow><Combo label="도면층" value="0"><Ico n="bulb" s={6} /><Ico n="sun" s={6} /><Ico n="lock" s={6} /><Ico n="swatch" s={6} /></Combo></ComboRow>
              <ComboRow><Ico n="lay1" /><Ico n="lay2" /><Ico n="lay1" /><Ico n="lay1" /><Ico n="lay2" />현재로 설정</ComboRow>
            </ComboColumn>
          </PanelTools>
        </Panel>
        <Panel $w={53}>
          <PanelTools>
            <Big n="insert" label="삽입" />
            <ToolColumn><Small n="create" label="작성" /><Small n="create" label="편집" /></ToolColumn>
          </PanelTools>
        </Panel>
        <Panel $w={95}>
          <PanelTools $gap={1}>
            <Big n="props" label="특성" />
            <ComboColumn>
              <ComboRow><Ico n="wheel" /><Combo label="색상" value="ByLayer"><Ico n="swatch" s={6} /></Combo></ComboRow>
              <ComboRow><Ico n="weights" /><Combo label="선가중치" value="도면층별" center><RuleSample /></Combo></ComboRow>
            </ComboColumn>
          </PanelTools>
        </Panel>
        <Panel $w={26}>
          <PanelTools $gap={1}><Big n="group" label="그룹" s={12} /><ToolColumn><Small n="ungroup" /><Small n="create" /></ToolColumn></PanelTools>
        </Panel>
        <Panel $w={29}>
          <PanelTools><Big n="ruler" label="측정" /><ToolColumn><Small n="house" /><Small n="select" /><Small n="calc" /></ToolColumn></PanelTools>
          <PanelTitle>유틸리티<Ico n="down" s={3} /></PanelTitle>
        </Panel>
        <Panel $w={43}>
          <PanelTools><Spacer /><Big n="paste" label="붙여넣기" more /><Spacer /><ToolColumn><Small n="cut" more /><Small n="sheet" more /></ToolColumn></PanelTools>
          <PanelTitle>클립보드</PanelTitle>
        </Panel>
        <Panel $w={20}>
          <PanelTools><Big n="base" label="기준" more /></PanelTools>
          <PanelTitle>뷰<Ico n="down" s={3} /><Ico n="down" s={3} /></PanelTitle>
        </Panel>
      </Ribbon>
      <DocTabs>
        <DocTab>시작</DocTab><DocTab $on>Drawing1<Ico n="x" s={4} /></DocTab><IconButton aria-label="새 탭"><Ico n="plus" s={5} /></IconButton>
      </DocTabs>
      <Body>
        <Palette>
          <PaletteTitle>특성</PaletteTitle>
          <PaletteTop>
            <Combo label="선택 요소" value="선택 요소가 없습니다" />
            {['pick', 'pick2', 'quick'].map((n) => <IconButton key={n} aria-label={n}><Ico n={n} /></IconButton>)}
          </PaletteTop>
          {groups.map((g) => (
            <Group key={g.title}>
              <GroupHead>{g.title}<Ico n="down" s={4} /></GroupHead>
              <PropTable><tbody>
                {g.rows.map(([k, v, kind]) => (
                  <tr key={k}><th scope="row">{k}</th><td><Value $dim={kind === 'dim'}>
                    {kind === 'swatch' && <Ico n="swatch" s={6} />}{kind === 'line' && <RuleSample />}{v}
                  </Value></td></tr>
                ))}
              </tbody></PropTable>
            </Group>
          ))}
        </Palette>
        <Work>
          <Canvas>
            <ViewLabel>[−][평면도][2D 와이어프레임]</ViewLabel>
            <Ucs width="29" height="32" viewBox="0 0 29 32" fill="none" stroke="#b9c0c9">
              <path d="M3 6v23h20M1 27h4v4H1zM4 0l2 3 2-3M6 3v3M24 24l4 4M28 24l-4 4" />
            </Ucs>
            <Credit>
              <CreditName>캐드신</CreditName>
              <CreditSmall>Copyright 2022 신동진</CreditSmall>
              <span>All rights reserved.</span>
              <CreditLink href="#cadsin">www.bit.ly/캐드신</CreditLink>
            </Credit>
            <Cube width="44" height="60" viewBox="0 0 44 60" aria-label="뷰 큐브">
              <circle cx="22" cy="22" r="16" fill="none" stroke="#4b525c" strokeWidth="4" />
              <rect x="14" y="14" width="16" height="16" fill="#b9bbc0" stroke="#8d9299" />
              <g fill="#a3aab3" fontSize="5" textAnchor="middle">
                <text x="22" y="6">북</text><text x="22" y="42">남</text><text x="4" y="24">서</text><text x="39" y="24">동</text>
                <text x="22" y="24" fill="#6b7078" fontSize="4">평면도</text>
              </g>
              <rect x="13" y="49" width="18" height="6" rx="1" fill="#8d939c" />
              <text x="20" y="54" fill="#cfd3d9" fontSize="4" textAnchor="middle">WCS</text>
            </Cube>
            <NavBar />
          </Canvas>
          <Command>
            <CommandSide><Ico n="dots" s={5} /><Ico n="x" s={4} /><Ico n="wrench" s={7} /></CommandSide>
            <CommandMain>
              <History>{history.map((h, i) => <span key={i}>{h}</span>)}</History>
              <Prompt><Ico n="screen" s={6} /><Ico n="down" s={3} /><PromptInput aria-label="명령 입력" placeholder="명령 입력" /></Prompt>
            </CommandMain>
          </Command>
        </Work>
      </Body>
      <LayoutBar>
        <LayoutTab $on>모형</LayoutTab><LayoutTab>배치1</LayoutTab><LayoutTab>배치2</LayoutTab><IconButton aria-label="새 배치"><Ico n="plus" s={5} /></IconButton>
      </LayoutBar>
      <StatusBar>
        <Spacer />
        <StatusTools>
          <StatusButton $w={12}>모형</StatusButton>
          {status.map(([n, on, w], i) => <StatusButton key={i} $on={on} $w={w} aria-label={n}><Ico n={n} s={n === 'down' ? 3 : 7} /></StatusButton>)}
          <StatusButton $w={8}>1:1</StatusButton>
          {status2.map(([n, w], i) => <StatusButton key={i} $w={w} aria-label={n}><Ico n={n} s={n === 'down' ? 3 : 7} /></StatusButton>)}
        </StatusTools>
      </StatusBar>
      <WorkspaceMenu role="menu">
        <WorkspaceItem><Ico n="check" s={4} />제도 및 주석</WorkspaceItem>
        <WorkspaceItem><span />3D 기본 사항</WorkspaceItem>
        <WorkspaceItem><span />3D 모델링</WorkspaceItem>
        <MenuRule />
        <WorkspaceItem><span />다른 이름으로 현재 항목 저장...</WorkspaceItem>
        <WorkspaceItem><span />작업공간 설정...</WorkspaceItem>
        <WorkspaceItem><span />사용자화...</WorkspaceItem>
        <WorkspaceItem><span />작업공간 레이블 표시</WorkspaceItem>
      </WorkspaceMenu>
      <CustomizeDialog />
      <Frame $x={1} $y={74} $w={27} $h={16} />
      <Frame $x={176} $y={165} $w={55} $h={13} />
      <Frame $x={349} $y={132} $w={123} $h={12} />
      <Frame $x={424} $y={257} $w={94} $h={16} />
      <Frame $x={665} $y={389} $w={32} $h={11} />
      <Frame $x={734} $y={408} $w={9} $h={10} />
      <Pin $x={737} $y={401}>1</Pin>
      <Pin $x={656} $y={394}>2</Pin>
      <Pin $x={239} $y={171}>3</Pin>
      <Pin $x={340} $y={139}>4</Pin>
      <Pin $x={415} $y={264}>5</Pin>
      <Note>단축키 변경</Note>
    </App>
  );
}
